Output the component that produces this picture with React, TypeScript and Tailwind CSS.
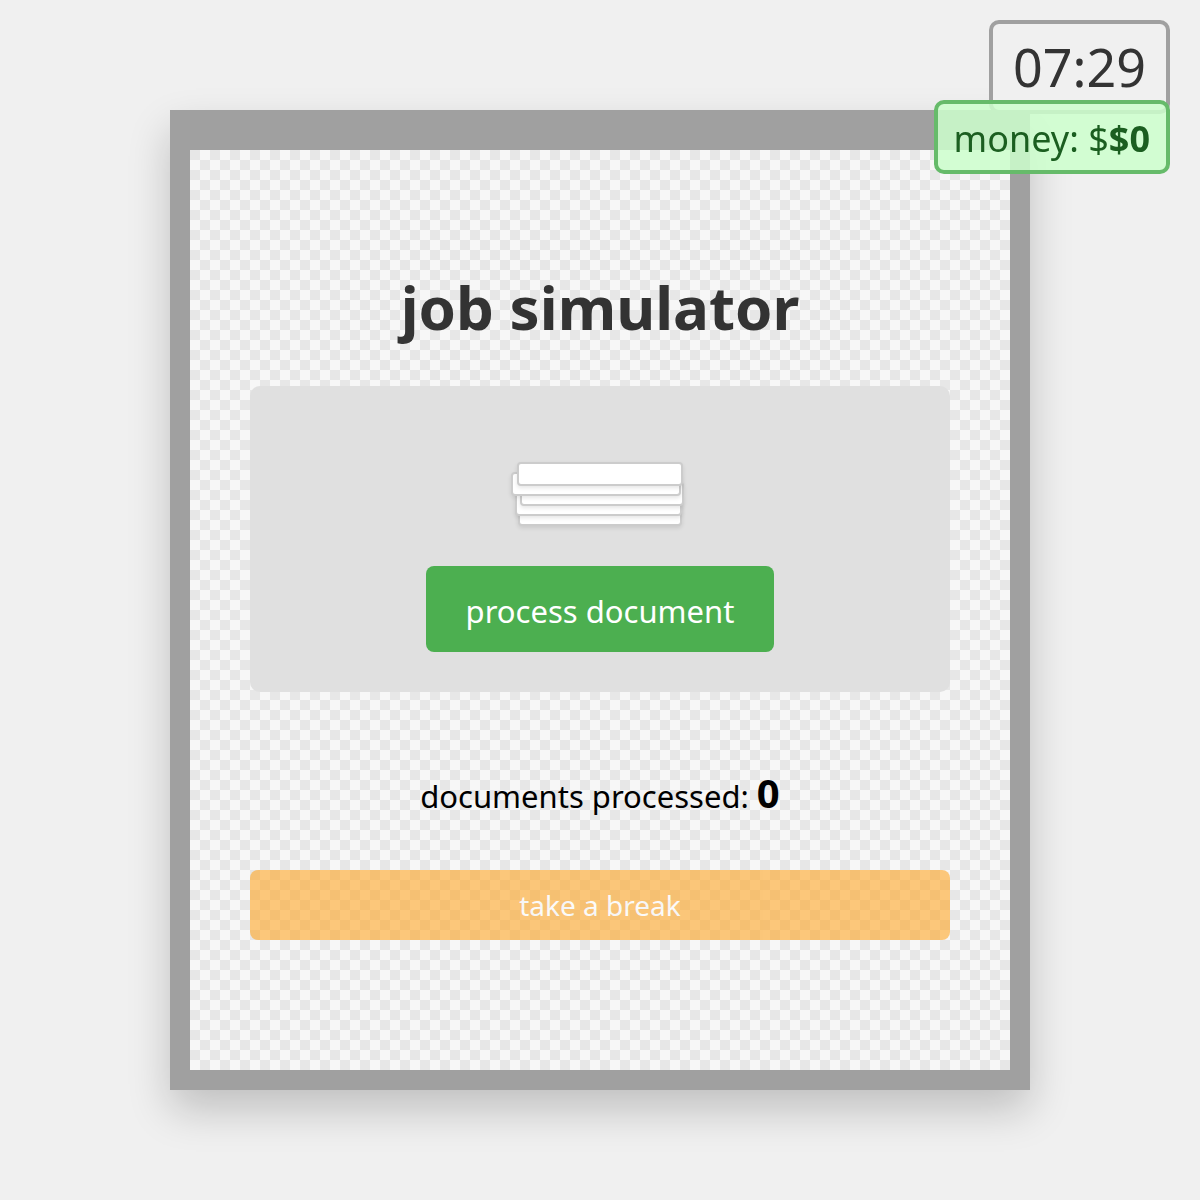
import { useState } from "react";
import { clsx } from "clsx";

// bottom sheets sit behind the ones above them
const sheets = [
  "z-50 ml-[17px] w-[166px]",
  "z-40 ml-[11px] w-[170px]",
  "z-30 ml-5 w-[164px]",
  "z-20 ml-[15px] w-[167px]",
  "z-10 ml-[18px] w-[164px]"
];

function PaperStack() {
  return (
    <div className="isolate flex h-[100px] w-[200px] flex-col justify-end" aria-hidden="true">
      {sheets.map((sheet, i) => (
        <div
          key={sheet}
          className={clsx(
            "relative h-6 shrink-0 rounded border-2 border-[#ccc] bg-white shadow-[0_2px_4px_rgba(0,0,0,0.1)]",
            i > 0 && "-mt-[14px]",
            sheet
          )}
        />
      ))}
    </div>
  );
}

function Hud({ time, money }: { time: string; money: number }) {
  return (
    <>
      <div className="fixed top-5 right-[30px] z-10 rounded-[10px] border-4 border-[#a0a0a0] bg-[#f0f0f0] px-5 py-2.5 text-[52px] leading-[66px] text-[#333]">
        {time}
      </div>
      <div className="fixed top-[100px] right-[30px] z-20 rounded-[10px] border-4 border-[#66bb6a] bg-[#ccffcc]/85 px-4 pt-2.5 pb-1.5 text-[36px] leading-[50px] text-[#1b5e20]">
        money: $<strong>${money}</strong>
      </div>
    </>
  );
}

export default function App() {
  const [processed, setProcessed] = useState(0);

  return (
    <div className="flex min-h-screen justify-center bg-[#f0f0f0] px-5 py-[110px] font-['Comic_Sans_MS','Noto_Sans',sans-serif]">
      <Hud time="07:29" money={0} />

      <main className="flex w-full max-w-[860px] flex-col justify-center border-20 border-t-40 border-[#a0a0a0] bg-[repeating-conic-gradient(#f7f7f7_0_25%,#e7e7e7_0_50%)] bg-size-[20px_20px] px-[60px] py-10 shadow-[0_20px_40px_rgba(0,0,0,0.2)]">
        <h1 className="mb-[52px] text-center text-[60px] leading-[54px] font-bold text-[#333]">
          job simulator
        </h1>

        <section className="flex flex-col items-center gap-10 rounded-[10px] bg-[#e0e0e0] p-10">
          <PaperStack />
          <button
            type="button"
            onClick={() => setProcessed((n) => n + 1)}
            className="rounded-lg bg-[#4caf50] px-10 pt-[22px] pb-[18px] text-[31px] leading-[46px] text-white"
          >
            process document
          </button>
        </section>

        <p className="mt-[76px] mb-[46px] text-center text-[31px] leading-[56px] text-black">
          documents processed: <strong className="text-[40px] leading-none">{processed}</strong>
        </p>

        <button
          type="button"
          disabled
          className="w-full rounded-lg bg-[#ffa726] py-[15px] text-[28px] leading-10 text-white opacity-60"
        >
          take a break
        </button>
      </main>
    </div>
  );
}
